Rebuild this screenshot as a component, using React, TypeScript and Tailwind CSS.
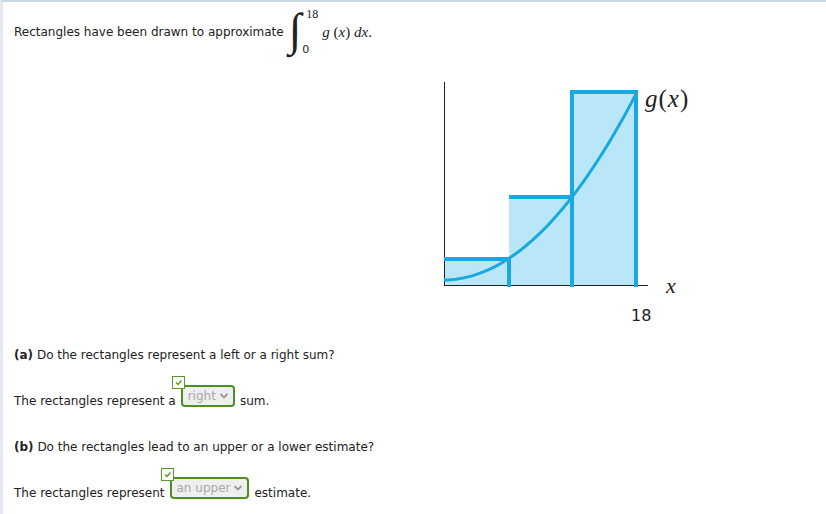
import * as React from 'react';

const STROKE = '#19a8e0';
const FILL = '#b9e7f7';

function Graph(): React.ReactNode {
  // curve y = 280 - 0.5t - 20.5t^2, t = (x - 447) / 64
  const pts: Array<string> = [];
  for (let i = 0; i <= 48; i++) {
    const t = (i / 48) * 3;
    const x = 447 + t * 64;
    const y = 280 - 0.5 * t - 20.5 * t * t;
    pts.push(`${ x.toFixed(1) },${ y.toFixed(1) }`);
  }
  return (
    <svg width="270" height="250" viewBox="440 75 270 250" className="block">
      <rect x="447" y="259" width="65" height="26" fill={ FILL }/>
      <rect x="512" y="197" width="63" height="88" fill={ FILL }/>
      <rect x="575" y="92" width="64" height="193" fill={ FILL }/>
      <line x1="447.5" y1="82" x2="447.5" y2="285" stroke="#222" strokeWidth="1"/>
      <line x1="447" y1="285.5" x2="651" y2="285.5" stroke="#222" strokeWidth="1"/>
      <polyline points={ pts.join(' ') } fill="none" stroke={ STROKE } strokeWidth="3"/>
      <path d="M447 259 H512 V287 M512 197 H575 V287 M575 287 V92 H639 V287" fill="none" stroke={ STROKE } strokeWidth="4"/>
      <text x="648" y="107" fontFamily="'Liberation Serif', serif" fontSize="25" letterSpacing="1" fill="#222">
        <tspan fontStyle="italic">g</tspan>(<tspan fontStyle="italic">x</tspan>)
      </text>
      <text x="669" y="293" fontFamily="'Liberation Serif', serif" fontStyle="italic" fontSize="22" fill="#222">x</text>
      <text x="634" y="321" fontFamily="'DejaVu Sans', sans-serif" fontSize="16" fill="#222">18</text>
    </svg>
  );
}

function CheckMark(): React.ReactNode {
  return (
    <span className="absolute -left-[9px] -top-[9px] w-[13px] h-[13px] border border-[#5a9a2a] bg-white">
      <svg width="11" height="11" viewBox="0 0 11 11" className="block">
        <path d="M3 5.5 L5 7.5 L8.5 3.5" fill="none" stroke="#4f9a1f" strokeWidth="1.3"/>
      </svg>
    </span>
  );
}

function Select(props: { readonly label: string }): React.ReactNode {
  return (
    <span className="relative inline-flex items-center mx-[5px] align-middle -translate-y-[5px]">
      <CheckMark/>
      <span className="inline-flex items-center h-[22px] pl-[5px] pr-[4px] border-2 border-[#4f8f1f] rounded-[4px] bg-[#efefef] text-[#a9a9a9]">
        { props.label }
        <svg width="10" height="8" viewBox="0 0 10 8" className="ml-[3px]">
          <path d="M1.5 2 L5 5.5 L8.5 2" fill="none" stroke="#999" strokeWidth="1.8"/>
        </svg>
      </span>
    </span>
  );
}

export default function App(): React.ReactNode {
  return (
    <div className="w-[826px] h-[514px] bg-white border-t-2 border-t-[#c9d8e4] border-l-[3px] border-l-[#e3eaf1] text-[#222] text-[12px] font-['DejaVu_Sans',Verdana,sans-serif] overflow-hidden">
      <div className="flex items-center h-[60px] pl-[11px]">
        <span>Rectangles have been drawn to approximate</span>
        <span className="inline-flex items-stretch h-[50px] ml-[5px]">
          <span className="font-['Liberation_Serif',serif] text-[46px] leading-[50px] -mt-[2px]">∫</span>
          <span className="flex flex-col justify-between pb-[1px]">
            <span className="font-['Liberation_Serif',serif] text-[12px] leading-[14px] ml-[5px]">18</span>
            <span className="text-[11px] leading-[12px] ml-px">0</span>
          </span>
        </span>
        <span className="ml-[4px] font-['Liberation_Serif',serif] text-[15px]">
          <i>g</i> (<i>x</i>) <i>dx</i>.
        </span>
      </div>
      <div className="pl-[434px] pt-[13px]">
        <Graph/>
      </div>
      <div className="pl-[11px] pt-[21px]">
        <p><b>(a)</b> Do the rectangles represent a left or a right sum?</p>
        <p className="mt-[26px]">The rectangles represent a<Select label="right"/>sum.</p>
        <p className="mt-[26px]"><b>(b)</b> Do the rectangles lead to an upper or a lower estimate?</p>
        <p className="mt-[26px]">The rectangles represent<Select label="an upper"/>estimate.</p>
      </div>
    </div>
  );
}
